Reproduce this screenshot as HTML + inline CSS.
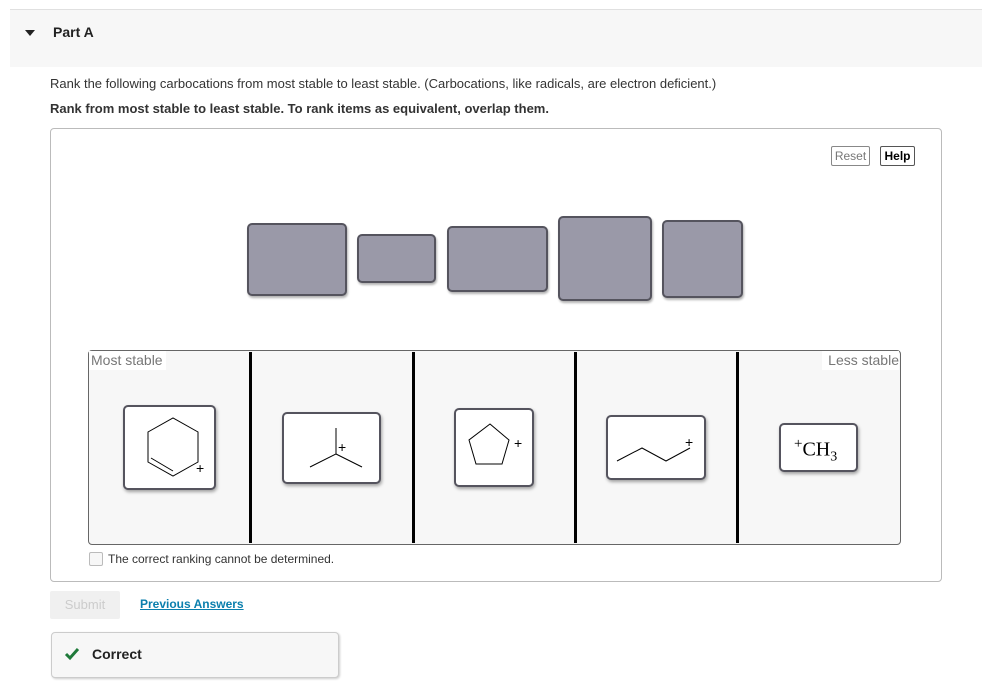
<!DOCTYPE html>
<html><head><style>
body{margin:0;width:982px;height:698px;background:#fff;font-family:"Liberation Sans",Arial,sans-serif;position:relative;overflow:hidden}
.a{position:absolute}
.g{position:absolute;background:#9a99a8;border:2px solid #55545e;border-radius:5px;box-sizing:border-box;box-shadow:1px 2px 2px rgba(0,0,0,.3)}
.c{position:absolute;background:#fff;border:2px solid #55545e;border-radius:5px;box-sizing:border-box;box-shadow:1px 2px 3px rgba(0,0,0,.35)}
.d{position:absolute;top:352px;width:3px;height:191px;background:#000}
</style></head><body>
<div class="a" style="left:10px;top:9px;width:972px;height:57px;background:#f7f7f7;border-top:1px solid #e0e0e0"></div>
<div class="a" style="left:25px;top:30px;width:0;height:0;border-left:5px solid transparent;border-right:5px solid transparent;border-top:6px solid #222"></div>
<div class="a" style="left:53px;top:24px;font-size:14px;font-weight:bold;color:#222">Part A</div>
<div class="a" style="left:50px;top:76px;font-size:13px;color:#333">Rank the following carbocations from most stable to least stable. (Carbocations, like radicals, are electron deficient.)</div>
<div class="a" style="left:50px;top:101px;font-size:13px;font-weight:bold;color:#333">Rank from most stable to least stable. To rank items as equivalent, overlap them.</div>
<div class="a" style="left:50px;top:128px;width:892px;height:454px;border:1px solid #bbb;border-radius:4px;box-sizing:border-box"></div>
<div class="a" style="left:831px;top:146px;width:39px;height:20px;border:1px solid #888;border-radius:2px;box-sizing:border-box;font-size:12px;color:#777;text-align:center;line-height:18px">Reset</div>
<div class="a" style="left:880px;top:146px;width:35px;height:20px;border:1px solid #555;border-radius:2px;box-sizing:border-box;font-size:12px;font-weight:bold;color:#000;text-align:center;line-height:18px">Help</div>
<div class="g" style="left:247px;top:223px;width:100px;height:73px"></div>
<div class="g" style="left:357px;top:234px;width:79px;height:49px"></div>
<div class="g" style="left:447px;top:226px;width:101px;height:66px"></div>
<div class="g" style="left:558px;top:216px;width:94px;height:85px"></div>
<div class="g" style="left:662px;top:220px;width:81px;height:78px"></div>
<div class="a" style="left:88px;top:350px;width:813px;height:195px;background:#f7f7f7;border:1px solid #666;border-radius:4px;box-sizing:border-box"></div>
<div class="a" style="left:89px;top:351px;width:75px;height:19px;background:#fff;font-size:14px;color:#777;line-height:18px;padding-left:2px">Most stable</div>
<div class="a" style="left:822px;top:351px;width:77px;height:19px;background:#fff;font-size:14px;color:#777;line-height:18px;text-align:right">Less stable</div>
<div class="d" style="left:249px"></div><div class="d" style="left:412px"></div><div class="d" style="left:574px"></div><div class="d" style="left:736px"></div>
<div class="c" style="left:123px;top:405px;width:93px;height:85px"><svg width="89" height="81" style="position:absolute;left:0;top:0" fill="none" stroke="#000" stroke-width="1"><path d="M23 25 L23 55 L48 69 L73 55 L73 25 L48 11 Z M26 51 L48 64"/><text x="71" y="66" font-size="14" fill="#000" stroke="none">+</text></svg></div>
<div class="c" style="left:282px;top:412px;width:99px;height:72px"><svg width="95" height="68" style="position:absolute;left:0;top:0" fill="none" stroke="#000" stroke-width="1"><path d="M52 14 L52 40 L26 53 M52 40 L78 53"/><text x="54" y="38" font-size="14" fill="#000" stroke="none">+</text></svg></div>
<div class="c" style="left:454px;top:408px;width:80px;height:79px"><svg width="76" height="75" style="position:absolute;left:0;top:0" fill="none" stroke="#000" stroke-width="1"><path d="M34 14 L53 30 L46 54 L20 54 L13 30 Z"/><text x="58" y="38" font-size="14" fill="#000" stroke="none">+</text></svg></div>
<div class="c" style="left:606px;top:415px;width:100px;height:65px"><svg width="96" height="61" style="position:absolute;left:0;top:0" fill="none" stroke="#000" stroke-width="1"><path d="M9 44 L34 31 L58 44 L82 31"/><text x="77" y="30" font-size="14" fill="#000" stroke="none">+</text></svg></div>
<div class="c" style="left:779px;top:423px;width:79px;height:49px"><div style="position:absolute;left:13px;top:11px;font-family:'Liberation Serif',serif;font-size:20px;color:#000;white-space:nowrap"><sup style="font-size:15px">+</sup>CH<sub style="font-size:14px">3</sub></div></div>
<div class="a" style="left:89px;top:552px;width:12px;height:12px;border:1px solid #bbb;border-radius:2px;background:#f7f7f7"></div>
<div class="a" style="left:108px;top:552px;font-size:12px;color:#333">The correct ranking cannot be determined.</div>
<div class="a" style="left:50px;top:591px;width:70px;height:28px;background:#f0f0f0;border-radius:2px;font-size:13px;color:#ccc;text-align:center;line-height:28px">Submit</div>
<div class="a" style="left:140px;top:597px;font-size:12px;font-weight:bold;color:#0b7fad;text-decoration:underline">Previous Answers</div>
<div class="a" style="left:51px;top:632px;width:288px;height:46px;background:#f7f7f7;border:1px solid #ccc;border-radius:4px;box-sizing:border-box;box-shadow:1px 1px 2px rgba(0,0,0,.2)"></div>
<svg class="a" style="left:64px;top:647px" width="16" height="14"><path d="M2 7 L6 11 L14 2" stroke="#1f7a3a" stroke-width="3" fill="none"/></svg>
<div class="a" style="left:92px;top:646px;font-size:14px;font-weight:bold;color:#222">Correct</div>
</body></html>
